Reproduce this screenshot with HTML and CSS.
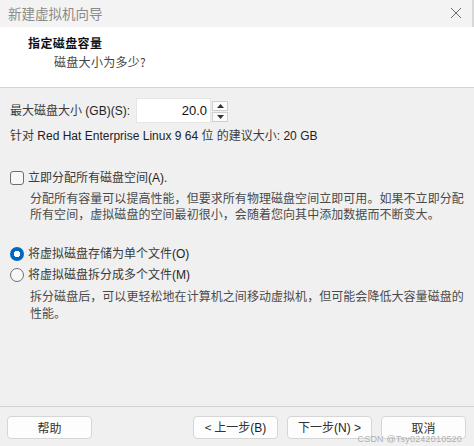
FILE: index.html
```html
<!DOCTYPE html>
<html lang="zh-CN">
<head>
<meta charset="utf-8">
<title>新建虚拟机向导</title>
<link rel="stylesheet" href="styles.css">
</head>
<body>
<div class="window">
  <div class="titlebar">
    <span class="title">新建虚拟机向导</span>
    <svg class="close" width="12" height="12" viewBox="0 0 12 12"><path d="M1 1L11 11M11 1L1 11" stroke="#6a6a6a" stroke-width="1" fill="none"/></svg>
  </div>
  <div class="header">
    <div class="h-title">指定磁盘容量</div>
    <div class="h-sub">磁盘大小为多少?</div>
  </div>
  <div class="content">
    <div class="size-row">
      <span class="lbl">最大磁盘大小 <span class="lat">(GB)(S):</span></span>
      <div class="input">20.0</div>
      <div class="spin">
        <div class="spin-btn"><svg width="7" height="4" viewBox="0 0 7 4"><path d="M0 4L3.5 0L7 4Z" fill="#333"/></svg></div>
        <div class="spin-btn"><svg width="7" height="4" viewBox="0 0 7 4"><path d="M0 0L3.5 4L7 0Z" fill="#333"/></svg></div>
      </div>
    </div>
    <div class="rec">针对 <span class="lat">Red Hat Enterprise Linux 9 64</span> 位 的建议大小<span class="lat">: 20 GB</span></div>
    <div class="opt check-row">
      <span class="checkbox"></span>
      <span>立即分配所有磁盘空间<span class="lat">(A).</span></span>
    </div>
    <div class="desc d1">分配所有容量可以提高性能，但要求所有物理磁盘空间立即可用。如果不立即分配所有空间，虚拟磁盘的空间最初很小，会随着您向其中添加数据而不断变大。</div>
    <div class="opt radio-row r1">
      <span class="radio on"></span>
      <span>将虚拟磁盘存储为单个文件<span class="lat">(O)</span></span>
    </div>
    <div class="opt radio-row r2">
      <span class="radio"></span>
      <span>将虚拟磁盘拆分成多个文件<span class="lat">(M)</span></span>
    </div>
    <div class="desc d2">拆分磁盘后，可以更轻松地在计算机之间移动虚拟机，但可能会降低大容量磁盘的性能。</div>
  </div>
  <div class="footer">
    <button class="btn">帮助</button>
    <div class="spacer"></div>
    <button class="btn">&lt; 上一步<span class="lat">(B)</span></button>
    <button class="btn">下一步<span class="lat">(N) &gt;</span></button>
    <button class="btn cancel">取消</button>
    <span class="watermark">CSDN @Tsy0242010520</span>
  </div>
</div>
</body>
</html>
```
FILE: styles.css
```css
* { box-sizing: border-box; }
html, body { margin: 0; padding: 0; }
body {
  width: 474px;
  height: 446px;
  overflow: hidden;
  background: #f0f0f0;
  font-family: "Liberation Sans", "Noto Sans CJK SC", sans-serif;
  font-size: 12px;
  color: #3a3a3a;
}
.window {
  position: relative;
  width: 474px;
  height: 446px;
  display: flex;
  flex-direction: column;
}
.titlebar {
  height: 27px;
  flex: none;
  background: #f3f3f3;
  display: flex;
  align-items: center;
  justify-content: space-between;
  padding: 0 10px 0 8px;
  border-right: 2px solid #d8d8d8;
}
.title {
  font-family: "Noto Sans CJK SC", sans-serif;
  font-size: 13.5px;
  color: #8a8a8a;
  line-height: 1;
}
.close { display: block; margin-top: -1px; }
.header {
  height: 61px;
  flex: none;
  background: #ffffff;
  border-bottom: 1px solid #d4d4d4;
  padding-top: 7px;
}
.h-title {
  font-family: "Noto Sans CJK SC", sans-serif;
  font-weight: bold;
  font-size: 12px;
  letter-spacing: 0.4px;
  color: #111;
  line-height: 18px;
  padding-left: 28px;
}
.h-sub {
  font-family: "Noto Sans CJK SC", sans-serif;
  font-size: 12px;
  letter-spacing: 0.3px;
  color: #444;
  line-height: 18px;
  padding-left: 54px;
  margin-top: 1px;
}
.content {
  flex: 1;
  padding: 10px 0 0 10px;
  display: flex;
  flex-direction: column;
}
.lat { font-family: "Liberation Sans", sans-serif; color: #1e1e1e; }
.size-row {
  height: 25px;
  display: flex;
  align-items: center;
}
.lbl { width: 126px; line-height: 16px; }
.input {
  width: 75px;
  height: 25px;
  background: #fff;
  border: 1px solid #e6e6e6;
  text-align: right;
  padding-right: 3px;
  font-size: 13px;
  line-height: 23px;
  color: #111;
}
.spin {
  margin-left: 1px;
  width: 16px;
  height: 21px;
  display: flex;
  flex-direction: column;
  gap: 1px;
  margin-top: 2px;
}
.spin-btn {
  flex: 1;
  background: #fbfbfb;
  border: 1px solid #cfcfcf;
  display: flex;
  align-items: center;
  justify-content: center;
}
.spin-btn svg { display: block; }
.rec { margin-top: 5px; line-height: 16px; }
.opt {
  display: flex;
  align-items: center;
  gap: 4px;
  line-height: 16px;
}
.check-row { margin-top: 26px; }
.checkbox {
  width: 14px;
  height: 14px;
  border: 1px solid #6f6f6f;
  border-radius: 3px;
  background: #f7f7f7;
  flex: none;
}
.desc {
  margin-left: 20px;
  margin-top: 5px;
  line-height: 16px;
  letter-spacing: 0.05px;
  color: #4a4a4a;
  width: 440px;
}
.r1 { margin-top: 23px; }
.r2 { margin-top: 5px; }
.d2 { margin-top: 6px; line-height: 17px; }
.radio {
  width: 14px;
  height: 14px;
  border-radius: 50%;
  border: 1px solid #6f6f6f;
  background: #f7f7f7;
  flex: none;
}
.radio.on {
  border: none;
  background: radial-gradient(circle, #ffffff 0 3px, #0067c0 3.5px);
}
.footer {
  height: 40px;
  flex: none;
  border-top: 1px solid #d2d2d2;
  display: flex;
  align-items: flex-start;
  padding: 9px 8px 0 7px;
  gap: 9px;
}
.spacer { flex: 1; }
.btn {
  width: 85px;
  height: 23px;
  background: #fdfdfd;
  border: 1px solid #d6d6d6;
  border-radius: 4px;
  font-family: "Noto Sans CJK SC", sans-serif;
  font-size: 12px;
  color: #333;
  padding: 0;
  line-height: 20px;
}
.btn .lat { font-size: 12px; }
.watermark {
  position: absolute;
  right: 12px;
  bottom: 2px;
  font-family: "Liberation Sans", sans-serif;
  font-size: 9px;
  color: rgba(150, 150, 150, 0.75);
  letter-spacing: 0.2px;
}
```
